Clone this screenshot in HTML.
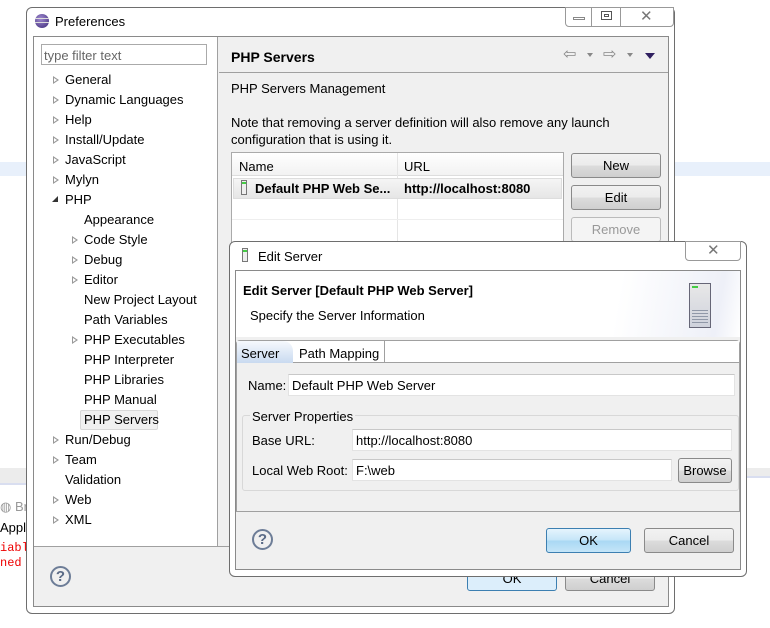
<!DOCTYPE html>
<html><head><style>
*{margin:0;padding:0;box-sizing:border-box}
body{width:770px;height:628px;background:#fff;position:relative;overflow:hidden;font-family:"Liberation Sans","DejaVu Sans",sans-serif;font-size:13px;color:#000}
.a{position:absolute}
.t{position:absolute;line-height:16px;white-space:nowrap;margin-top:1px}
.tri{position:absolute;width:0;height:0;border-top:4px solid transparent;border-bottom:4px solid transparent;border-left:6px solid #999}
.tri:after{content:"";position:absolute;left:-5px;top:-2px;border-top:2px solid transparent;border-bottom:2px solid transparent;border-left:3px solid #fff}
.btn{position:absolute;border:1px solid #8a8a8a;border-radius:3px;background:linear-gradient(#f2f2f2,#ebebeb 50%,#dcdcdc 51%,#cfcfcf);text-align:center;line-height:23px}
.inp{position:absolute;background:#fff;border:1px solid #e3e3e3;border-top-color:#c8c8c8;line-height:21px;padding-left:3px}
.help{position:absolute;width:21px;height:21px;border:2px solid #6d7d97;border-radius:50%;color:#5a6a86;font-weight:bold;font-size:15px;text-align:center;line-height:17px}
.x{position:absolute;color:#777;font-size:15px;line-height:16px}
</style></head><body>
<div class="a" style="left:0;top:162px;width:30px;height:14px;background:#e8f0fb"></div>
<div class="a" style="left:674px;top:162px;width:96px;height:14px;background:#e8f0fb"></div>
<div class="a" style="left:0;top:468px;width:28px;height:17px;background:#ececec;border-bottom:2px solid #d9def0"></div>
<div class="a" style="left:746px;top:468px;width:24px;height:10px;background:#ececec;border-bottom:2px solid #d9def0"></div>
<div class="t" style="left:0;top:498px;color:#999">◍ Br</div>
<div class="t" style="left:0;top:519px">Appl</div>
<div class="t" style="left:0;top:539px;color:#e00;font-family:'Liberation Mono',monospace;font-size:12px">iabl</div>
<div class="t" style="left:0;top:554px;color:#e00;font-family:'Liberation Mono',monospace;font-size:12px">ned</div>

<div class="a" style="left:26px;top:7px;width:649px;height:607px;border:1px solid #6e6e6e;border-radius:6px;background:#fff"></div>
<div class="a" style="left:35px;top:14px;width:14px;height:14px;border-radius:50%;background:radial-gradient(circle at 40% 35%,#a08ad0,#3c2a78)"></div>
<div class="a" style="left:35px;top:18px;width:14px;height:1px;background:#ddd"></div>
<div class="a" style="left:35px;top:22px;width:14px;height:1px;background:#ddd"></div>
<div class="t" style="left:55px;top:13px">Preferences</div>
<div class="a" style="left:565px;top:7px;width:109px;height:20px;border:1px solid #999;border-radius:0 0 4px 4px;background:#fff"></div>
<div class="a" style="left:591px;top:7px;width:1px;height:20px;background:#999"></div>
<div class="a" style="left:620px;top:7px;width:1px;height:20px;background:#999"></div>
<div class="a" style="left:573px;top:17px;width:12px;height:3px;border:1px solid #888"></div>
<div class="a" style="left:601px;top:11px;width:11px;height:9px;border:1px solid #555"><div class="a" style="left:2px;top:2px;width:5px;height:3px;border:1px solid #555"></div></div>
<div class="x" style="left:640px;top:9px">✕</div>
<div class="a" style="left:33px;top:36px;width:636px;height:571px;border:1px solid #8a8a8a;background:#f0f0f0"></div>
<div class="a" style="left:34px;top:37px;width:184px;height:509px;background:#fff;border-right:1px solid #a0a0a0"></div>
<div class="a" style="left:41px;top:44px;width:166px;height:21px;border:1px solid #aaa;background:#fff"></div>
<div class="t" style="left:44px;top:47px;color:#666">type filter text</div>
<div class="tri" style="left:53px;top:76px"></div><div class="t" style="left:65px;top:71px">General</div>
<div class="tri" style="left:53px;top:96px"></div><div class="t" style="left:65px;top:91px">Dynamic Languages</div>
<div class="tri" style="left:53px;top:116px"></div><div class="t" style="left:65px;top:111px">Help</div>
<div class="tri" style="left:53px;top:136px"></div><div class="t" style="left:65px;top:131px">Install/Update</div>
<div class="tri" style="left:53px;top:156px"></div><div class="t" style="left:65px;top:151px">JavaScript</div>
<div class="tri" style="left:53px;top:176px"></div><div class="t" style="left:65px;top:171px">Mylyn</div>
<div class="a" style="left:52px;top:196px;width:0;height:0;border-left:6px solid transparent;border-bottom:6px solid #333"></div><div class="t" style="left:65px;top:191px">PHP</div>
<div class="t" style="left:84px;top:211px">Appearance</div>
<div class="tri" style="left:72px;top:236px"></div><div class="t" style="left:84px;top:231px">Code Style</div>
<div class="tri" style="left:72px;top:256px"></div><div class="t" style="left:84px;top:251px">Debug</div>
<div class="tri" style="left:72px;top:276px"></div><div class="t" style="left:84px;top:271px">Editor</div>
<div class="t" style="left:84px;top:291px">New Project Layout</div>
<div class="t" style="left:84px;top:311px">Path Variables</div>
<div class="tri" style="left:72px;top:336px"></div><div class="t" style="left:84px;top:331px">PHP Executables</div>
<div class="t" style="left:84px;top:351px">PHP Interpreter</div>
<div class="t" style="left:84px;top:371px">PHP Libraries</div>
<div class="t" style="left:84px;top:391px">PHP Manual</div>
<div class="a" style="left:80px;top:410px;width:78px;height:20px;border:1px solid #d8d8d8;border-radius:2px;background:#f0f0f0"></div>
<div class="t" style="left:84px;top:411px">PHP Servers</div>
<div class="tri" style="left:53px;top:436px"></div><div class="t" style="left:65px;top:431px">Run/Debug</div>
<div class="tri" style="left:53px;top:456px"></div><div class="t" style="left:65px;top:451px">Team</div>
<div class="t" style="left:65px;top:471px">Validation</div>
<div class="tri" style="left:53px;top:496px"></div><div class="t" style="left:65px;top:491px">Web</div>
<div class="tri" style="left:53px;top:516px"></div><div class="t" style="left:65px;top:511px">XML</div>
<div class="a" style="left:34px;top:546px;width:634px;height:1px;background:#a0a0a0"></div>
<div class="help" style="left:50px;top:566px">?</div>
<div class="a" style="left:219px;top:72px;width:449px;height:1px;background:#a0a0a0"></div>
<div class="t" style="left:231px;top:48px;font-weight:bold;font-size:14px">PHP Servers</div>
<div class="t" style="left:563px;top:46px;color:#888;font-size:16px">⇦</div>
<div class="a" style="left:587px;top:53px;border-left:3px solid transparent;border-right:3px solid transparent;border-top:4px solid #888"></div>
<div class="t" style="left:603px;top:46px;color:#888;font-size:16px">⇨</div>
<div class="a" style="left:627px;top:53px;border-left:3px solid transparent;border-right:3px solid transparent;border-top:4px solid #888"></div>
<div class="a" style="left:645px;top:53px;border-left:5px solid transparent;border-right:5px solid transparent;border-top:6px solid #302060"></div>
<div class="t" style="left:231px;top:80px">PHP Servers Management</div>
<div class="t" style="left:231px;top:114px">Note that removing a server definition will also remove any launch</div>
<div class="t" style="left:231px;top:131px">configuration that is using it.</div>
<div class="a" style="left:231px;top:152px;width:333px;height:100px;border:1px solid #aaa;background:#fff"></div>
<div class="a" style="left:232px;top:153px;width:331px;height:23px;background:linear-gradient(#fff,#f2f2f2);border-bottom:1px solid #ddd"></div>
<div class="a" style="left:397px;top:153px;width:1px;height:90px;background:#e5e5e5"></div>
<div class="t" style="left:239px;top:158px">Name</div>
<div class="t" style="left:404px;top:158px">URL</div>
<div class="a" style="left:233px;top:178px;width:329px;height:21px;background:linear-gradient(#f5f5f5,#e6e6e6);border:1px solid #ddd"></div>
<div class="a" style="left:241px;top:180px;width:6px;height:15px;border:1px solid #777;background:#eee"><div class="a" style="left:0;top:1px;width:4px;height:2px;background:#4c4"></div></div>
<div class="t" style="left:255px;top:180px;font-weight:bold">Default PHP Web Se...</div>
<div class="t" style="left:404px;top:180px;font-weight:bold">http://localhost:8080</div>
<div class="a" style="left:232px;top:219px;width:331px;height:1px;background:#eee"></div>
<div class="btn" style="left:571px;top:153px;width:90px;height:25px">New</div>
<div class="btn" style="left:571px;top:185px;width:90px;height:25px">Edit</div>
<div class="btn" style="left:571px;top:217px;width:90px;height:25px;color:#999;border-color:#bbb;background:#f4f4f4">Remove</div>
<div class="btn" style="left:467px;top:566px;width:90px;height:25px;border-color:#3c7fb1;background:#dceefb">OK</div>
<div class="btn" style="left:565px;top:566px;width:90px;height:25px">Cancel</div>

<div class="a" style="left:229px;top:241px;width:518px;height:336px;border:1px solid #6e6e6e;border-radius:6px;background:#fff"></div>
<div class="a" style="left:242px;top:248px;width:6px;height:14px;border:1px solid #777;background:#eee"><div class="a" style="left:0;top:1px;width:4px;height:2px;background:#4c4"></div></div>
<div class="t" style="left:258px;top:248px">Edit Server</div>
<div class="a" style="left:685px;top:241px;width:56px;height:20px;border:1px solid #999;border-radius:0 0 4px 4px;background:#fff"></div>
<div class="x" style="left:707px;top:243px">✕</div>
<div class="a" style="left:235px;top:270px;width:506px;height:300px;border:1px solid #8a8a8a;background:#f0f0f0"></div>
<div class="a" style="left:236px;top:271px;width:504px;height:66px;background:linear-gradient(100deg,#fff 75%,#eef0f8 95%,#fff)"></div>
<div class="t" style="left:243px;top:282px;font-weight:bold">Edit Server [Default PHP Web Server]</div>
<div class="t" style="left:250px;top:307px">Specify the Server Information</div>
<div class="a" style="left:689px;top:283px;width:22px;height:45px;border:1px solid #667;background:linear-gradient(#e8e8e8,#cfd2dc)"></div>
<div class="a" style="left:692px;top:286px;width:6px;height:2px;background:#4c4"></div>
<div class="a" style="left:692px;top:310px;width:16px;height:15px;background:repeating-linear-gradient(#9098a8 0 1px,transparent 1px 3px)"></div>
<div class="a" style="left:236px;top:340px;width:504px;height:172px;border:1px solid #a0a0a0;border-radius:4px 4px 0 0;background:#f0f0f0"></div>
<div class="a" style="left:237px;top:341px;width:502px;height:22px;background:#fff;border-bottom:1px solid #a0a0a0"></div>
<div class="a" style="left:237px;top:341px;width:56px;height:22px;background:linear-gradient(#f6f9fd,#c9daf0);border-radius:0 10px 0 0"></div>
<div class="t" style="left:241px;top:345px">Server</div>
<div class="a" style="left:291px;top:341px;width:94px;height:22px;border-right:1px solid #a0a0a0"></div>
<div class="t" style="left:299px;top:345px">Path Mapping</div>
<div class="t" style="left:248px;top:377px">Name:</div>
<div class="inp" style="left:288px;top:374px;width:447px;height:22px">Default PHP Web Server</div>
<div class="a" style="left:242px;top:415px;width:497px;height:76px;border:1px solid #d8d8d8;border-radius:3px"></div>
<div class="t" style="left:250px;top:408px;background:#f0f0f0;padding:0 2px">Server Properties</div>
<div class="t" style="left:252px;top:432px">Base URL:</div>
<div class="inp" style="left:352px;top:429px;width:380px;height:22px">http://localhost:8080</div>
<div class="t" style="left:252px;top:462px">Local Web Root:</div>
<div class="inp" style="left:352px;top:459px;width:320px;height:22px">F:\web</div>
<div class="btn" style="left:678px;top:458px;width:54px;height:25px">Browse</div>
<div class="help" style="left:252px;top:529px">?</div>
<div class="btn" style="left:546px;top:528px;width:85px;height:25px;border-color:#3c7fb1;background:linear-gradient(#e5f4fd,#c4e5f8 50%,#a9d8f4 51%,#c4e5f8)">OK</div>
<div class="btn" style="left:644px;top:528px;width:90px;height:25px">Cancel</div>
</body></html>
